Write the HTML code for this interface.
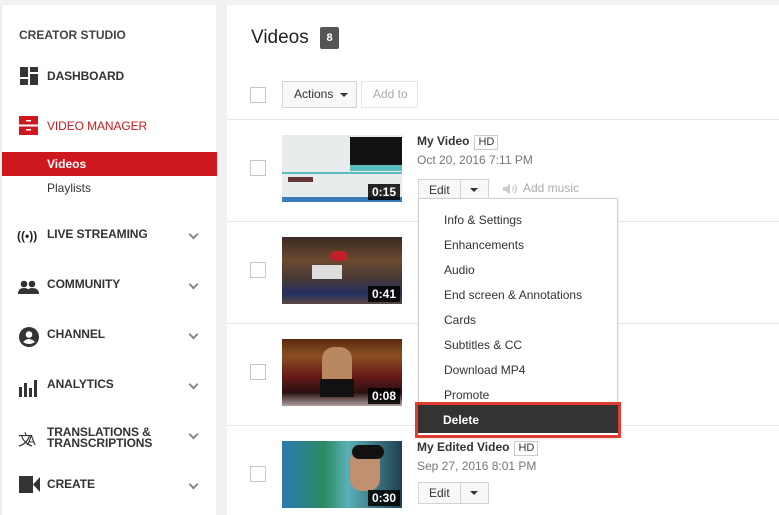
<!DOCTYPE html>
<html><head><meta charset="utf-8"><style>
*{box-sizing:border-box;margin:0;padding:0}
body{width:779px;height:510px;overflow:hidden;background:#f1f1f1;font-family:"Liberation Sans",Arial,sans-serif;position:relative;color:#222}
.side{position:absolute;left:1px;top:5px;width:215px;height:510px;background:#fff;border-left:1px solid #e8e8e8}
.main{position:absolute;left:227px;top:5px;width:560px;height:510px;background:#fff}
.a{position:absolute}
.nav{position:absolute;left:45px;font-size:12px;font-weight:bold;color:#333;letter-spacing:-0.1px}
.chev{position:absolute;left:188px;width:7px;height:7px;border-right:2px solid #888;border-bottom:2px solid #888;transform:rotate(45deg)}
.cb{position:absolute;left:250px;width:16px;height:16px;border:1px solid #c6c6c6;background:#fff}
.th{position:absolute;left:282px;width:120px;height:67px;overflow:hidden}
.dur{position:absolute;right:2px;bottom:2px;background:rgba(0,0,0,.85);color:#fff;font-size:12px;font-weight:bold;padding:1px 4px}
.hr{position:absolute;left:227px;width:552px;height:1px;background:#e6e6e6}
.title{position:absolute;left:417px;font-size:12px;font-weight:bold;color:#333}
.hd{display:inline-block;border:1px solid #ccc;font-weight:normal;font-size:11px;padding:0 3px;margin-left:5px;line-height:13px}
.date{position:absolute;left:417px;font-size:12px;color:#777}
.btn{position:absolute;height:22px;border:1px solid #d3d3d3;background:#f8f8f8;font-size:12px;color:#333;line-height:20px}
.menu{position:absolute;left:418px;top:198px;width:200px;height:240px;background:#fff;border:1px solid #d0d0d0;box-shadow:0 1px 2px rgba(0,0,0,.1)}
.mi{position:absolute;left:25px;font-size:12px;color:#333}
.tri{display:inline-block;width:0;height:0;border-left:4px solid transparent;border-right:4px solid transparent;border-top:4px solid #333;vertical-align:middle}
</style></head><body>
<div class="side">
 <div class="a" style="left:17px;top:23px;font-size:12px;font-weight:bold;color:#444">CREATOR STUDIO</div>
 <svg class="a" style="left:18px;top:62px" width="18" height="18"><rect x="0" y="0" width="8" height="10" fill="#333"/><rect x="10" y="0" width="8" height="5" fill="#333"/><rect x="0" y="12" width="8" height="6" fill="#333"/><rect x="10" y="7" width="8" height="11" fill="#333"/></svg>
 <div class="nav" style="top:64px">DASHBOARD</div>
 <svg class="a" style="left:17px;top:111px" width="19" height="19"><rect width="19" height="19" fill="#cc181e"/><rect x="0" y="8.5" width="19" height="2" fill="#fff"/><rect x="7" y="4" width="5" height="1.5" fill="#fff"/><rect x="7" y="13" width="5" height="1.5" fill="#fff"/></svg>
 <div class="nav" style="top:114px;color:#cc181e;font-weight:normal">VIDEO MANAGER</div>
 <div class="a" style="left:0;top:147px;width:215px;height:24px;background:#cc181e"></div>
 <div class="a" style="left:45px;top:152px;font-size:12px;font-weight:bold;color:#fff">Videos</div>
 <div class="a" style="left:45px;top:176px;font-size:12px;color:#333">Playlists</div>
 <div class="a" style="left:15px;top:224px;font-size:12px;font-weight:bold;color:#222">((•))</div>
 <div class="nav" style="top:222px">LIVE STREAMING</div><div class="chev" style="top:226px"></div>
 <svg class="a" style="left:16px;top:275px" width="21" height="15"><circle cx="6" cy="4" r="3.3" fill="#333"/><circle cx="14" cy="4" r="3.3" fill="#333"/><path d="M0 14 Q0 8 6 8 Q12 8 12 14Z M9 14 Q9 8 14 8 Q21 8 21 14Z" fill="#333"/></svg>
 <div class="nav" style="top:272px">COMMUNITY</div><div class="chev" style="top:276px"></div>
 <svg class="a" style="left:17px;top:322px" width="20" height="20"><circle cx="10" cy="10" r="10" fill="#333"/><circle cx="10" cy="7.5" r="3.3" fill="#fff"/><path d="M4 15 Q10 9 16 15 Q10 19 4 15Z" fill="#fff"/></svg>
 <div class="nav" style="top:322px">CHANNEL</div><div class="chev" style="top:326px"></div>
 <svg class="a" style="left:17px;top:374px" width="20" height="18"><rect x="0" y="8" width="3" height="10" fill="#333"/><rect x="5" y="4" width="3" height="14" fill="#333"/><rect x="10" y="9" width="3" height="9" fill="#333"/><rect x="15" y="1" width="3" height="17" fill="#333"/></svg>
 <div class="nav" style="top:372px">ANALYTICS</div><div class="chev" style="top:376px"></div>
 <div class="a" style="left:16px;top:424px;font-size:15px;color:#333">文<span style="font-size:13px;margin-left:-6px">A</span></div>
 <div class="nav" style="top:422px;line-height:11px">TRANSLATIONS &amp;<br>TRANSCRIPTIONS</div><div class="chev" style="top:426px"></div>
 <svg class="a" style="left:17px;top:471px" width="21" height="17"><rect x="0" y="0" width="14" height="17" fill="#333"/><path d="M14 8.5 L21 1 L21 16Z" fill="#333"/></svg>
 <div class="nav" style="top:472px">CREATE</div><div class="chev" style="top:476px"></div>
</div>
<div class="main"></div>
<div class="a" style="left:251px;top:27px;font-size:19px;color:#222">Videos</div>
<div class="a" style="left:320px;top:27px;width:19px;height:22px;background:#555;border-radius:2px;color:#fff;font-size:11px;font-weight:bold;text-align:center;line-height:22px">8</div>
<div class="cb" style="top:87px"></div>
<div class="btn" style="left:282px;top:81px;width:75px;height:27px;line-height:25px;padding-left:11px">Actions <span class="tri" style="margin-left:3px"></span></div>
<div class="btn" style="left:361px;top:81px;width:57px;height:27px;line-height:25px;padding-left:11px;background:#fff;color:#aaa;border-color:#e5e5e5">Add to</div>
<div class="hr" style="top:119px"></div>
<div class="hr" style="top:221px"></div>
<div class="hr" style="top:323px"></div>
<div class="hr" style="top:425px"></div>

<div class="cb" style="top:160px"></div>
<div class="th" style="top:135px;background:#e9ecec">
 <div class="a" style="left:68px;top:2px;width:52px;height:28px;background:#111"></div>
 <div class="a" style="left:68px;top:30px;width:52px;height:6px;background:#5bbcc0"></div>
 <div class="a" style="left:0;top:37px;width:120px;height:2px;background:#5bbcc0"></div>
 <div class="a" style="left:6px;top:42px;width:25px;height:5px;background:#633"></div>
 <div class="a" style="left:0;top:62px;width:120px;height:5px;background:#3a7bb8"></div>
 <div class="dur">0:15</div></div>
<div class="title" style="top:134px">My Video<span class="hd">HD</span></div>
<div class="date" style="top:153px">Oct 20, 2016 7:11 PM</div>
<div class="btn" style="left:418px;top:179px;width:71px;padding-left:10px">Edit<span style="position:absolute;left:41px;top:0;height:20px;border-left:1px solid #d3d3d3"></span><span class="tri" style="position:absolute;left:51px;top:8px"></span></div>
<svg class="a" style="left:502px;top:182px" width="16" height="14"><path d="M1 5 H4 L8 1.5 V12.5 L4 9 H1Z" fill="#ccc"/><path d="M10.5 4.5 Q12.5 7 10.5 9.5 M12.5 2.5 Q16 7 12.5 11.5" stroke="#ccc" stroke-width="1.3" fill="none"/></svg>
<div class="a" style="left:523px;top:181px;font-size:12px;color:#aaa">Add music</div>

<div class="cb" style="top:262px"></div>
<div class="th" style="top:237px;background:linear-gradient(180deg,#3a2a22 0%,#6b4a30 35%,#4a3a35 60%,#253060 85%,#5a4a40 100%)">
 <div class="a" style="left:48px;top:14px;width:18px;height:10px;background:#c0202a;border-radius:6px"></div>
 <div class="a" style="left:30px;top:28px;width:30px;height:14px;background:#ddd"></div>
 <div class="dur">0:41</div></div>
<div class="cb" style="top:364px"></div>
<div class="th" style="top:339px;background:linear-gradient(180deg,#5a2a10 0%,#8a5020 25%,#6a1a1a 55%,#2a1010 80%,#b0a0a0 100%)">
 <div class="a" style="left:40px;top:8px;width:30px;height:45px;background:#b88860;border-radius:12px"></div>
 <div class="a" style="left:38px;top:40px;width:34px;height:18px;background:#111"></div>
 <div class="dur">0:08</div></div>
<div class="cb" style="top:466px"></div>
<div class="th" style="top:441px;background:linear-gradient(90deg,#2a7ab0 0%,#2a8a60 35%,#5ab0b8 55%,#204050 100%)">
 <div class="a" style="left:68px;top:8px;width:30px;height:42px;background:#c09070;border-radius:12px"></div>
 <div class="a" style="left:70px;top:4px;width:32px;height:14px;background:#111;border-radius:8px"></div>
 <div class="dur">0:30</div></div>

<div class="title" style="top:440px">My Edited Video<span class="hd">HD</span></div>
<div class="date" style="top:459px">Sep 27, 2016 8:01 PM</div>
<div class="btn" style="left:418px;top:482px;width:71px;padding-left:10px">Edit<span style="position:absolute;left:41px;top:0;height:20px;border-left:1px solid #d3d3d3"></span><span class="tri" style="position:absolute;left:51px;top:8px"></span></div>

<div class="menu">
 <div class="mi" style="top:14px">Info &amp; Settings</div>
 <div class="mi" style="top:39px">Enhancements</div>
 <div class="mi" style="top:64px">Audio</div>
 <div class="mi" style="top:89px">End screen &amp; Annotations</div>
 <div class="mi" style="top:114px">Cards</div>
 <div class="mi" style="top:139px">Subtitles &amp; CC</div>
 <div class="mi" style="top:164px">Download MP4</div>
 <div class="mi" style="top:189px">Promote</div>
</div>
<div class="a" style="left:415px;top:402px;width:206px;height:36px;border:3px solid #e03c31;background:#fff"></div>
<div class="a" style="left:418px;top:405px;width:200px;height:28px;background:#333"></div>
<div class="a" style="left:443px;top:413px;font-size:12px;font-weight:bold;color:#fff">Delete</div>
</body></html>
